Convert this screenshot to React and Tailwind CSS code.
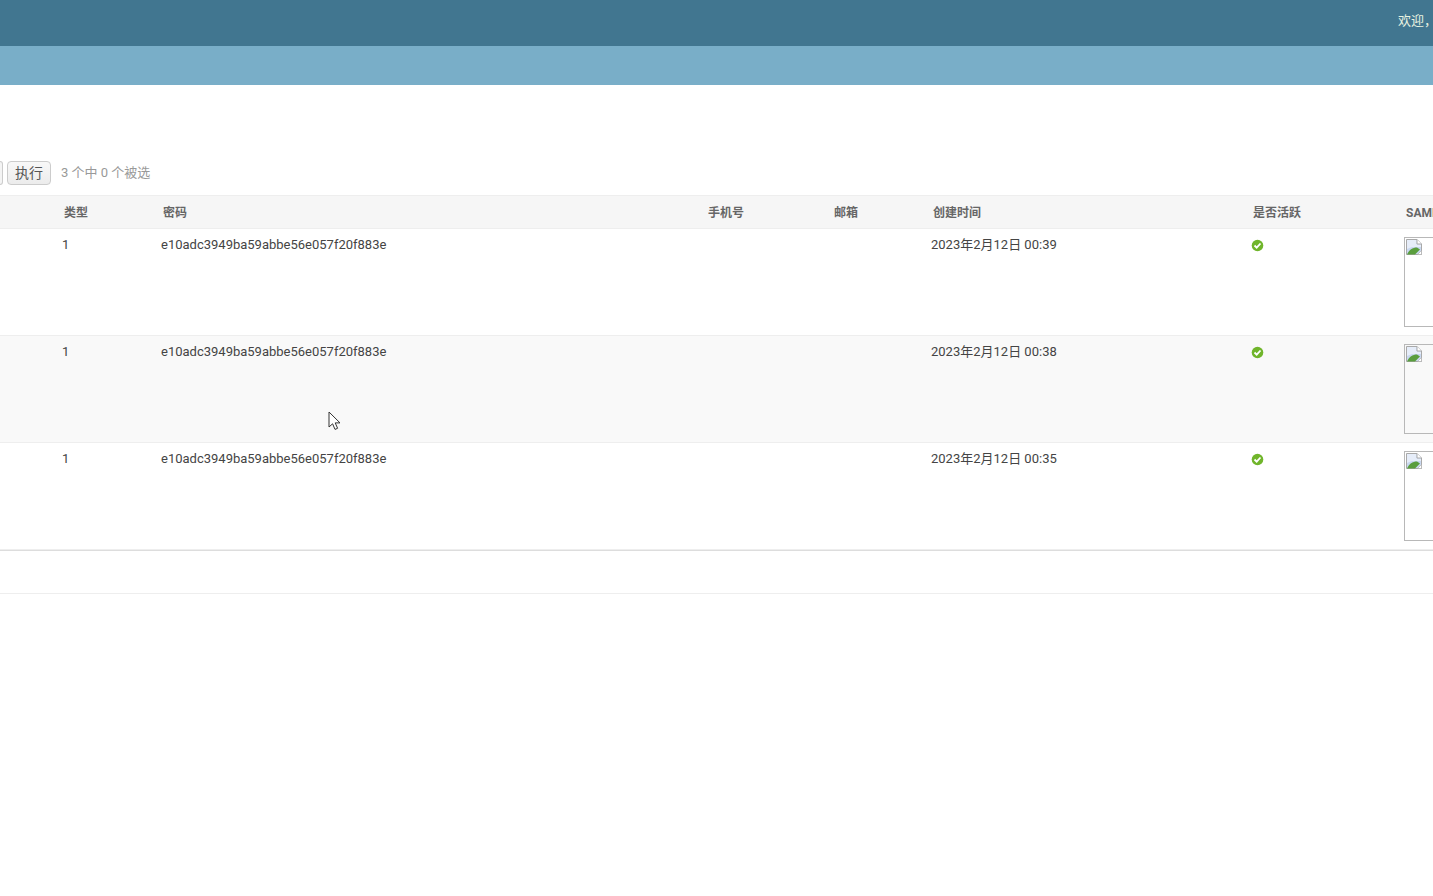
const rows = [
  { time: "2023年2月12日 00:39", bg: "bg-white" },
  { time: "2023年2月12日 00:38", bg: "bg-[#f9f9f9]" },
  { time: "2023年2月12日 00:35", bg: "bg-white" },
]

const heads = ["", "类型", "密码", "手机号", "邮箱", "创建时间", "是否活跃", "SAMPLE"]

function IconYes() {
  return (
    <svg width="13" height="13" viewBox="0 0 13 13" className="block">
      <circle cx="6.5" cy="6.5" r="5.8" fill="#70b52b" />
      <path d="M3.5 6.5l2.2 2.2 3.8-4.2" fill="none" stroke="#fff" strokeWidth="1.8" />
    </svg>
  )
}

function BrokenImage() {
  return (
    <div className="w-[90px] h-[90px] border border-[#b8b8b8] p-px">
      <svg width="16" height="16" viewBox="0 0 16 16" className="block">
        <path d="M0.5 0.5H11L15.5 5V15.5H0.5Z" fill="#c9d8f0" stroke="#a9a9a9" />
        <path d="M1 1H10.5V5.5H15V8H6L1 10Z" fill="#e6edf9" />
        <path d="M11 0.5V5H15.5" fill="#fff" stroke="#a9a9a9" />
        <path d="M1 15.5C3 11 6.5 8.5 11 8.5L14 10.5L9 15.5Z" fill="#5a9e3e" />
        <path d="M11.5 15.5L15.5 11.5V15.5Z" fill="#fff" stroke="#a9a9a9" strokeWidth="0.6" />
      </svg>
    </div>
  )
}

function Cursor() {
  return (
    <svg width="14" height="20" viewBox="0 0 14 20" className="absolute left-[328px] top-[411px]">
      <path d="M1 1V16L4.6 12.8L7 18.4L9.6 17.3L7.2 11.9H12Z" fill="#fff" stroke="#333" strokeWidth="1" />
    </svg>
  )
}

function App() {
  return (
    <div className="relative h-screen overflow-hidden bg-white font-['Roboto','Noto_Sans_CJK_SC',sans-serif] text-[13px] text-[#444]">
      <div className="h-[46px] bg-[#417690] flex justify-end overflow-hidden">
        <span className="mt-[13px] -mr-[30px] w-[65px] text-[13px] leading-4 whitespace-nowrap text-[#e8f3e0]">欢迎，</span>
      </div>
      <div className="h-[39px] bg-[#79aec8]"></div>

      <div className="flex items-center h-[24px] mt-[76px]">
        <div className="w-[3px] h-[24px] border border-l-0 border-[#ccc] rounded-r bg-[#f4f4f4]"></div>
        <button className="ml-[4px] w-[44px] h-[24px] border border-[#ccc] rounded bg-gradient-to-b from-[#f8f8f8] to-[#ececec] text-[14px] leading-none text-[#555]">
          执行
        </button>
        <span className="ml-[10px] text-[#999]">3 个中 0 个被选</span>
      </div>

      <table className="mt-[10px] w-[1520px] table-fixed border-collapse">
        <colgroup>
          <col className="w-[62px]" />
          <col className="w-[99px]" />
          <col className="w-[545px]" />
          <col className="w-[126px]" />
          <col className="w-[99px]" />
          <col className="w-[320px]" />
          <col className="w-[153px]" />
          <col />
        </colgroup>
        <thead>
          <tr className="h-[33px] bg-[#f6f6f6] border-y border-[#eee]">
            {heads.map((h, i) => (
              <th key={i} className="pt-[2px] pl-[2px] text-left align-middle text-[12px] font-bold text-[#666] whitespace-nowrap">
                {h}
              </th>
            ))}
          </tr>
        </thead>
        <tbody>
          {rows.map((r) => (
            <tr key={r.time} className={`h-[107px] border-b border-[#eee] align-top ${r.bg}`}>
              <td></td>
              <td className="pt-[6px]">1</td>
              <td className="pt-[6px]">e10adc3949ba59abbe56e057f20f883e</td>
              <td></td>
              <td></td>
              <td className="pt-[6px]">{r.time}</td>
              <td className="pt-[10px]"><IconYes /></td>
              <td className="pt-[8px]"><BrokenImage /></td>
            </tr>
          ))}
        </tbody>
      </table>

      <div className="h-[44px] border-t border-b border-t-[#ddd] border-b-[#eee]"></div>
      <Cursor />
    </div>
  )
}

export default App
